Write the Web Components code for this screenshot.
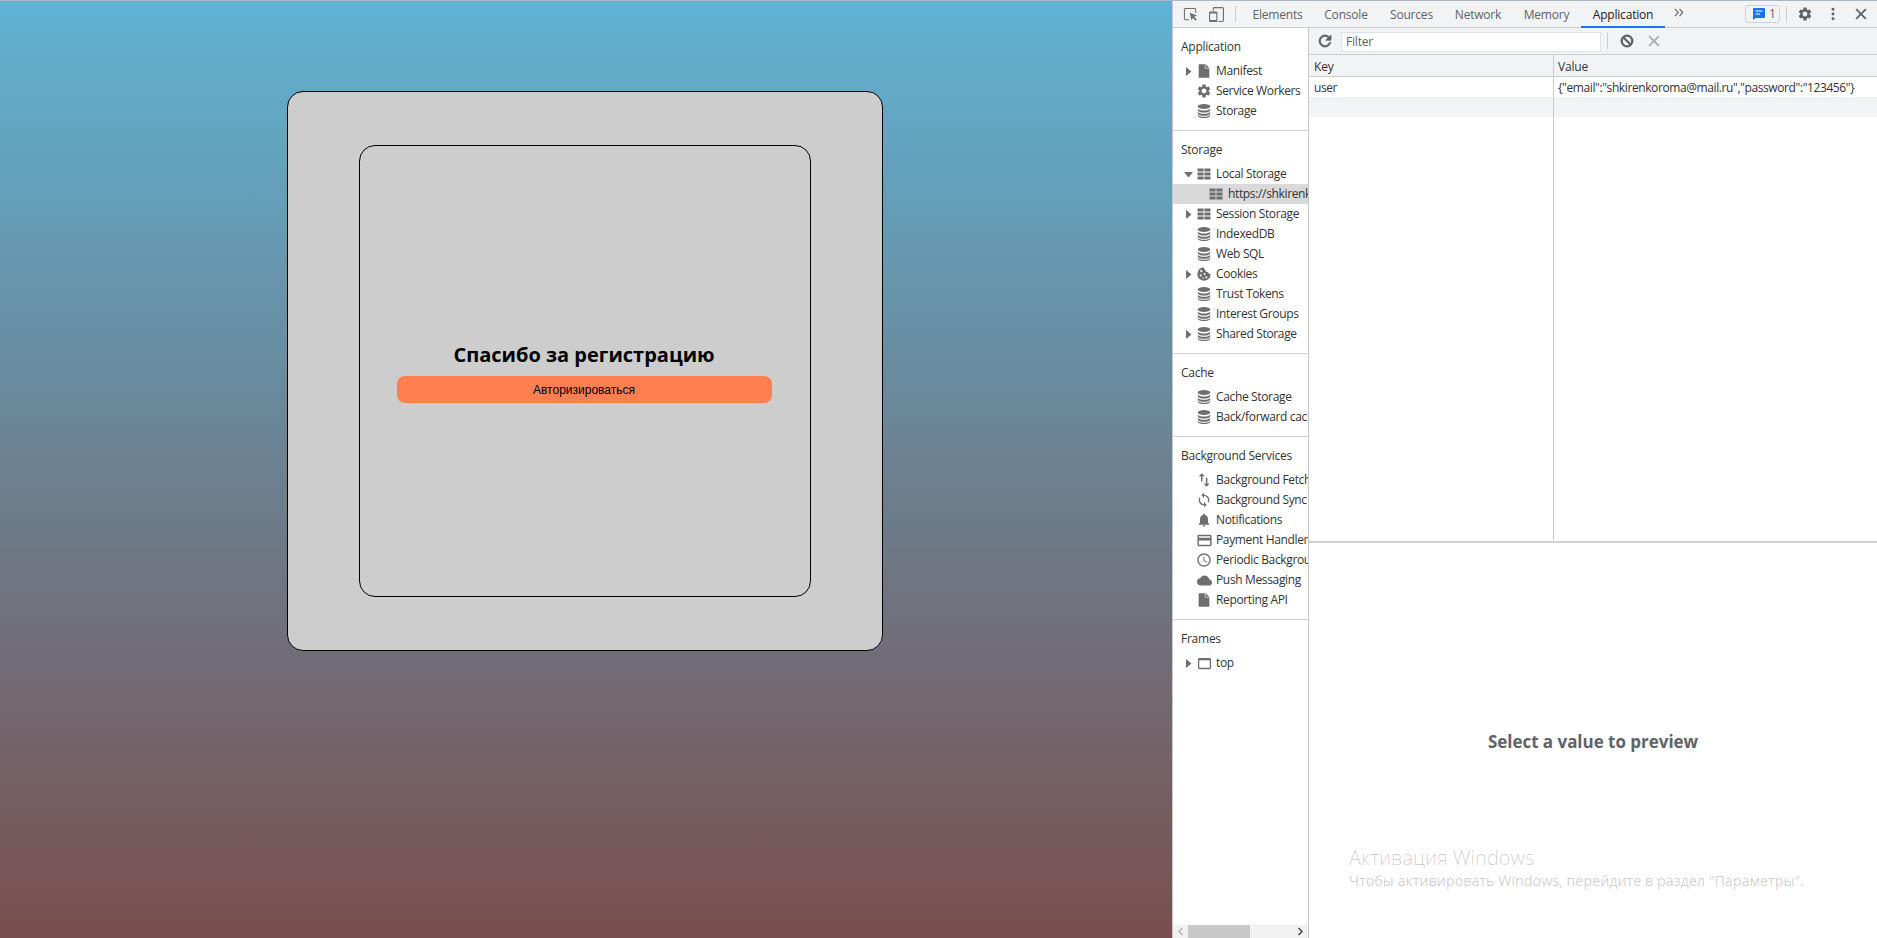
<!DOCTYPE html>
<html lang="ru">
<head>
<meta charset="utf-8">
<title>Спасибо за регистрацию</title>
<style>
html,body{margin:0;padding:0;height:100%;overflow:hidden;background:#fff}
</style>
</head>
<body>
<app-root>
  <reg-page slot="page">
    <reg-card>
      <reg-inner>
        <h1-title>Спасибо за регистрацию</h1-title>
        <reg-button>Авторизироваться</reg-button>
      </reg-inner>
    </reg-card>
  </reg-page>
  <dt-panel slot="tools">
    <dt-tabs></dt-tabs>
    <dt-body>
      <dt-sidebar>
        <dt-section label="Application">
          <dt-item icon="file" arrow="right">Manifest</dt-item>
          <dt-item icon="gear">Service Workers</dt-item>
          <dt-item icon="db">Storage</dt-item>
        </dt-section>
        <dt-section label="Storage">
          <dt-item icon="grid" arrow="down">Local Storage</dt-item>
          <dt-item icon="grid" depth="1" selected>https://shkirenkoroma.github.io</dt-item>
          <dt-item icon="grid" arrow="right">Session Storage</dt-item>
          <dt-item icon="db">IndexedDB</dt-item>
          <dt-item icon="db">Web SQL</dt-item>
          <dt-item icon="cookie" arrow="right">Cookies</dt-item>
          <dt-item icon="db">Trust Tokens</dt-item>
          <dt-item icon="db">Interest Groups</dt-item>
          <dt-item icon="db" arrow="right">Shared Storage</dt-item>
        </dt-section>
        <dt-section label="Cache">
          <dt-item icon="db">Cache Storage</dt-item>
          <dt-item icon="db">Back/forward cache</dt-item>
        </dt-section>
        <dt-section label="Background Services">
          <dt-item icon="swap">Background Fetch</dt-item>
          <dt-item icon="sync">Background Sync</dt-item>
          <dt-item icon="bell">Notifications</dt-item>
          <dt-item icon="card">Payment Handler</dt-item>
          <dt-item icon="clock">Periodic Background Sync</dt-item>
          <dt-item icon="cloud">Push Messaging</dt-item>
          <dt-item icon="file">Reporting API</dt-item>
        </dt-section>
        <dt-section label="Frames" last>
          <dt-item icon="frame" arrow="right">top</dt-item>
        </dt-section>
      </dt-sidebar>
      <dt-main>
        <dt-filterbar></dt-filterbar>
        <dt-table></dt-table>
        <dt-preview>Select a value to preview</dt-preview>
      </dt-main>
    </dt-body>
  </dt-panel>
  <win-mark slot="mark"></win-mark>
</app-root>

<script>
const UI_FONT = '"Open Sans","Noto Sans",sans-serif';
const ICONS = {
  file:['24','<path d="M6 2h8.500L20 7.500V22H4V2z"/><path d="M14 2v6h6" fill="none" stroke="#fff" stroke-width=".9"/>'],
  gear:['24','<path d="M19.14 12.94c.04-.3.06-.61.06-.94 0-.32-.02-.64-.07-.94l2.03-1.58a.49.49 0 0 0 .12-.61l-1.92-3.32a.488.488 0 0 0-.59-.22l-2.39.96c-.5-.38-1.03-.7-1.62-.94l-.36-2.54a.484.484 0 0 0-.48-.41h-3.84c-.24 0-.43.17-.47.41l-.36 2.54c-.59.24-1.13.57-1.62.94l-2.39-.96c-.22-.08-.47 0-.59.22L2.74 8.87c-.12.21-.08.47.12.61l2.03 1.58c-.05.3-.09.63-.09.94s.02.64.07.94l-2.03 1.58a.49.49 0 0 0-.12.61l1.92 3.32c.12.22.37.29.59.22l2.39-.96c.5.38 1.03.7 1.62.94l.36 2.54c.05.24.24.41.48.41h3.84c.24 0 .44-.17.47-.41l.36-2.54c.59-.24 1.13-.56 1.62-.94l2.39.96c.22.08.47 0 .59-.22l1.92-3.32c.12-.22.07-.47-.12-.61l-2.01-1.58zM12 15.6c-1.98 0-3.6-1.62-3.6-3.6s1.62-3.6 3.6-3.6 3.6 1.62 3.6 3.6-1.62 3.6-3.6 3.6z"/>'],
  db:['16','<ellipse cx="8" cy="3.600" rx="6.200" ry="2.500"/><path d="M1.800 5.300c.4 1.400 3 2.300 6.200 2.300s5.800-.9 6.200-2.300v2c-.4 1.400-3 2.300-6.200 2.300s-5.800-.9-6.200-2.300z"/><path d="M1.800 8.400c.4 1.400 3 2.300 6.200 2.300s5.800-.9 6.200-2.300v2c-.4 1.400-3 2.300-6.200 2.300s-5.800-.9-6.200-2.300z"/><path d="M1.800 11.400c.4 1.400 3 2.300 6.200 2.300s5.800-.9 6.200-2.300v1.300c-.4 1.400-3 2.300-6.200 2.300s-5.800-.9-6.200-2.300z"/>'],
  grid:['16','<path d="M1.500 2.500h6.100v3H1.500zM8.400 2.500h6.100v3H8.400zM1.500 6.500h6.100v3H1.500zM8.400 6.500h6.100v3H8.400zM1.500 10.500h6.100v3H1.500zM8.400 10.500h6.100v3H8.400z"/>'],
  cookie:['16','<path d="M8 1.300a6.700 6.700 0 1 0 6.700 6.700c-1.400.2-2.500-.7-2.700-2-1.400.2-2.700-.9-2.700-2.300C8.200 3.400 7.700 2.400 8 1.300z"/><g fill="#fff"><circle cx="5.300" cy="5.200" r="1.100"/><circle cx="4.700" cy="9.600" r="1"/><circle cx="8.500" cy="8" r=".9"/><circle cx="10.300" cy="11.200" r="1"/><circle cx="7" cy="12" r=".7"/></g>'],
  swap:['24','<path d="M16.500 17.010V9h-2v8.010h-3l4 3.990 4-3.990h-3zM9 3L5 6.990h3V14h2V6.990h3L9 3z"/>'],
  sync:['24','<path d="M12 4V1L8 5l4 4V6c3.310 0 6 2.690 6 6 0 1.010-.25 1.970-.7 2.800l1.460 1.460C19.540 15.030 20 13.570 20 12c0-4.420-3.580-8-8-8zm0 14c-3.310 0-6-2.690-6-6 0-1.010.25-1.970.7-2.800L5.240 7.740C4.460 8.970 4 10.430 4 12c0 4.420 3.580 8 8 8v3l4-4-4-4v3z"/>'],
  bell:['24','<path d="M12 22c1.100 0 2-.9 2-2h-4c0 1.100.89 2 2 2zm6-6v-5c0-3.070-1.640-5.640-4.500-6.320V4c0-.83-.67-1.500-1.500-1.500s-1.500.67-1.500 1.500v.68C7.630 5.360 6 7.920 6 11v5l-2 2v1h16v-1l-2-2z"/>'],
  card:['24','<path d="M20 4H4c-1.110 0-1.990.89-1.990 2L2 18c0 1.110.89 2 2 2h16c1.110 0 2-.89 2-2V6c0-1.110-.89-2-2-2zm0 14H4v-6h16v6zm0-10H4V6h16v2z"/>'],
  clock:['24','<path d="M11.990 2C6.470 2 2 6.480 2 12s4.470 10 9.990 10C17.520 22 22 17.520 22 12S17.520 2 11.990 2zM12 20c-4.420 0-8-3.580-8-8s3.580-8 8-8 8 3.580 8 8-3.580 8-8 8zm.5-13H11v6l5.250 3.150.75-1.230-4.500-2.670z"/>'],
  cloud:['24','<path d="M19.350 10.040C18.670 6.590 15.640 4 12 4 9.110 4 6.600 5.640 5.350 8.040 2.340 8.360 0 10.910 0 14c0 3.310 2.690 6 6 6h13c2.760 0 5-2.240 5-5 0-2.640-2.050-4.780-4.650-4.960z"/>'],
  frame:['16','<path fill-rule="evenodd" d="M2.500 2h11A1.500 1.500 0 0 1 15 3.500v9a1.500 1.500 0 0 1-1.500 1.500h-11A1.500 1.500 0 0 1 1 12.500v-9A1.500 1.500 0 0 1 2.500 2zM2.400 4.500v8.100h11.200V4.500z"/>'],
  refresh:['24','<path stroke="currentColor" stroke-width="1" d="M17.650 6.350C16.200 4.900 14.210 4 12 4c-4.420 0-7.990 3.580-7.990 8s3.570 8 7.990 8c3.730 0 6.840-2.550 7.730-6h-2.080c-.82 2.330-3.040 4-5.650 4-3.310 0-6-2.690-6-6s2.690-6 6-6c1.660 0 3.140.69 4.220 1.780L13 11h7V4l-2.350 2.350z"/>'],
  block:['24','<circle cx="12" cy="12" r="8" fill="none" stroke="currentColor" stroke-width="3.400"/><path d="M6.300 6.300l11.400 11.400" stroke="currentColor" stroke-width="3.400"/>'],
  close:['24','<path stroke="currentColor" stroke-width=".6" d="M19 6.410L17.590 5 12 10.590 6.410 5 5 6.410 10.590 12 5 17.590 6.410 19 12 13.410 17.590 19 19 17.590 13.410 12z"/>'],
  dots:['24','<circle cx="12" cy="5" r="2.200"/><circle cx="12" cy="12" r="2.200"/><circle cx="12" cy="19" r="2.200"/>'],
  inspect:['16','<path d="M6.500 13.500H2.700a1.200 1.200 0 0 1-1.200-1.200V2.700a1.200 1.200 0 0 1 1.200-1.200h9.600a1.200 1.200 0 0 1 1.200 1.200V6" fill="none" stroke="currentColor" stroke-width="1.100"/><path d="M7 6l8 3-3.200 1.300 2.900 3-1.300 1.300-2.900-3L9.200 14.500z"/>'],
  device:['16','<path fill-rule="evenodd" d="M5.500 0h8.700A1.800 1.800 0 0 1 16 1.800v12.400a1.800 1.800 0 0 1-1.800 1.800H10v-1.200h4.300a.5.500 0 0 0 .5-.5V1.700a.5.500 0 0 0-.5-.5H5.700a.5.500 0 0 0-.5.500V4H4V1.500A1.500 1.500 0 0 1 5.500 0z"/><path fill-rule="evenodd" d="M1.300 4.800h6.400A1.300 1.300 0 0 1 9 6.100v8.600A1.300 1.300 0 0 1 7.700 16H1.300A1.300 1.300 0 0 1 0 14.700V6.100a1.300 1.300 0 0 1 1.300-1.300zM1.200 7v6.800h6.600V7z"/>'],
  more:['12','<path d="M1.500 2.200L2.500 1.400 6 5.500 2.500 9.600 1.500 8.800 4.300 5.500zM6 2.200L7 1.400 10.500 5.500 7 9.600 6 8.800 8.800 5.500z"/>']
};
const ITEM_SIZE = {swap:18, card:17, cloud:15, frame:15};

function def(name, css, html){
  class C extends HTMLElement{
    constructor(){ super(); this.attachShadow({mode:'open'}); }
    connectedCallback(){
      if(this.shadowRoot.firstChild) return;
      this.shadowRoot.innerHTML='<style>'+css+'</style>'+(typeof html==='function'?html(this):html);
    }
  }
  customElements.define(name,C);
}

class DtIcon extends HTMLElement{
  constructor(){ super(); this.attachShadow({mode:'open'}); }
  connectedCallback(){
    const n=this.getAttribute('name'), s=this.getAttribute('size')||16, ic=ICONS[n];
    this.shadowRoot.innerHTML='<style>:host{display:inline-flex;align-items:center;justify-content:center;flex:none;width:'+s+'px;height:'+s+'px;color:var(--ic,#6e6e6e)}svg{display:block;fill:currentColor;overflow:visible}</style><svg width="'+s+'" height="'+s+'" viewBox="0 0 '+ic[0]+' '+ic[0]+'">'+ic[1]+'</svg>';
  }
}
customElements.define('dt-icon',DtIcon);

def('app-root',`
  :host{display:flex;flex-direction:column;width:1877px;height:938px;position:relative;overflow:hidden}
  .line{height:1px;background:#a9b6c4;flex:none}
  .row{flex:1;display:flex;min-height:0}
  ::slotted(reg-page){flex:none}
  ::slotted(dt-panel){flex:1}
`,`<div class="line"></div><div class="row"><slot name="page"></slot><slot name="tools"></slot></div><slot name="mark"></slot>`);

def('reg-page',`
  :host{display:flex;justify-content:center;align-items:flex-start;box-sizing:border-box;width:1172px;padding-top:90px;
    background:linear-gradient(180deg,#5fb3d4 0%,#794f4e 100%)}
`,`<slot></slot>`);

def('reg-card',`
  :host{display:flex;align-items:center;justify-content:center;box-sizing:border-box;width:596px;height:560px;margin-left:-2px;
    background:#cdcdcd;border:1px solid #000;border-radius:16px}
`,`<slot></slot>`);

def('reg-inner',`
  :host{display:flex;flex-direction:column;align-items:center;justify-content:center;box-sizing:border-box;width:452px;height:452px;padding-right:2px;
    border:1px solid #000;border-radius:16px}
`,`<slot></slot>`);

def('h1-title',`
  :host{display:block;font:700 20px/31px "Open Sans","Noto Sans",sans-serif;color:#000;margin-bottom:6px;white-space:nowrap}
`,`<slot></slot>`);

def('reg-button',`
  :host{display:flex;align-items:center;justify-content:center;width:375px;height:27px;border-radius:8px;background:#ff7f50;color:#000;
    font:12px "Liberation Sans",Arial,sans-serif}
`,`<slot></slot>`);

def('dt-panel',`
  :host{display:flex;flex-direction:column;min-width:0;border-left:1px solid #c4c7cb;background:#fff;
    font:12px/20px ${UI_FONT};color:#333}
`,`<slot></slot>`);

def('dt-tabs',`
  :host{display:flex;align-items:stretch;height:26px;box-sizing:content-box;background:#f1f3f4;border-bottom:1px solid #cbcdd1;flex:none;letter-spacing:-.2px}
  .ib{display:flex;align-items:center;gap:10px;padding:0 0 0 10px;--ic:#6e6e6e}
  .sep{width:1px;height:16px;background:#cbcdd1;align-self:center;flex:none}
  .tab{display:flex;align-items:center;justify-content:center;color:#5f6368;box-sizing:border-box;white-space:nowrap;padding-top:1px}
  .tab.on{color:#202124;border-bottom:2px solid #1a73e8;padding-top:3px;margin-bottom:-1px}
  .more{--ic:#6e6e6e;display:flex;align-items:center;margin-left:8px;margin-top:-2px}
  .right{margin-left:auto;display:flex;align-items:center;--ic:#5f6368;padding-right:7px}
  .badge{display:flex;align-items:center;gap:3px;box-sizing:border-box;width:35px;height:18px;border:1px solid #d0d3d7;border-radius:3px;padding-left:6px;color:#5f6368;--ic:#1a73e8;margin-right:6px}
  .badge span{font-size:12px}
`,`<div class="ib"><dt-icon name="inspect" size="15"></dt-icon><dt-icon name="device" size="15" style="margin-left:1px"></dt-icon></div>
  <div class="sep" style="margin:0 6px 0 11px"></div>
  <div class="tab" style="width:71px">Elements</div>
  <div class="tab" style="width:66px">Console</div>
  <div class="tab" style="width:65px">Sources</div>
  <div class="tab" style="width:68px">Network</div>
  <div class="tab" style="width:69px">Memory</div>
  <div class="tab on" style="width:84px">Application</div>
  <div class="more"><dt-icon name="more" size="12"></dt-icon></div>
  <div class="right">
    <div class="badge"><svg width="14" height="14" viewBox="0 0 14 14"><path d="M2 1h10a1 1 0 0 1 1 1v8a1 1 0 0 1-1 1H3.500L1 13V2a1 1 0 0 1 1-1z" fill="#1a73e8"/><path d="M3.500 4h7M3.500 7h4.500" stroke="#fff" stroke-width="1.200"/></svg><span>1</span></div>
    <div class="sep"></div>
    <dt-icon name="gear" size="16" style="margin-left:10px"></dt-icon>
    <dt-icon name="dots" size="16" style="margin-left:12px"></dt-icon>
    <dt-icon name="close" size="18" style="margin-left:11px"></dt-icon>
  </div>`);

def('dt-body',`
  :host{flex:1;display:flex;min-height:0}
`,`<slot></slot>`);

def('dt-sidebar',`
  :host{position:relative;display:flex;flex-direction:column;flex:none;width:135px;box-sizing:content-box;border-right:1px solid #c4c7cb;overflow:hidden;background:#fff}
  .list{flex:1;min-height:0;overflow:hidden}
  .bar{flex:none;height:13px;display:flex;align-items:center;background:#f1f1f1;position:relative}
  .btn{width:15px;height:13px;display:flex;align-items:center;justify-content:center;flex:none}
  .thumb{width:62px;height:13px;background:#c8c8c8;flex:none}
  .fill{flex:1}
`,`<div class="list"><slot></slot></div>
  <div class="bar"><div class="btn"><svg width="7" height="9" viewBox="0 0 7 9"><path d="M5.500 1L2 4.500 5.500 8" fill="none" stroke="#b4b4b4" stroke-width="1.500"/></svg></div><div class="thumb"></div><div class="fill"></div><div class="btn"><svg width="7" height="9" viewBox="0 0 7 9"><path d="M1.500 1L5 4.500 1.500 8" fill="none" stroke="#505050" stroke-width="1.600"/></svg></div></div>`);

def('dt-section',`
  :host{display:block;box-sizing:content-box;padding-bottom:9px;border-bottom:1px solid #d0d3d7}
  :host([last]){border-bottom:0}
  .h{height:24px;padding:9px 0 0 8px;line-height:20px;white-space:nowrap;color:#333;letter-spacing:-.25px}
`,el=>`<div class="h">${el.getAttribute('label')}</div><slot></slot>`);

def('dt-item',`
  :host{display:flex;align-items:center;height:20px;white-space:nowrap;padding-left:8px;box-sizing:border-box;overflow:hidden;width:135px;--ic:#6e6e6e}
  :host([depth="1"]){padding-left:20px}
  :host([selected]){background:#d9d9d9}
  .a{width:15px;flex:none;display:flex;align-items:center;justify-content:center;box-sizing:border-box}
  .i{width:16px;flex:none;display:flex;align-items:center;justify-content:center}
  .i dt-icon{margin:0 -2px}
  .t{margin-left:4px;color:#333;letter-spacing:-.35px}
`,el=>{
  const a=el.getAttribute('arrow'), ic=el.getAttribute('icon');
  const tri=a==='right'?'<svg width="7" height="9" viewBox="0 0 7 9"><path d="M1 0l5.500 4.500L1 9z" fill="#6e6e6e"/></svg>':a==='down'?'<svg width="9" height="7" viewBox="0 0 9 7"><path d="M0 1h9L4.500 6.500z" fill="#6e6e6e"/></svg>':'';
  return `<div class="a">${tri}</div><div class="i"><dt-icon name="${ic}" size="${ITEM_SIZE[ic]||16}"></dt-icon></div><span class="t"><slot></slot></span>`;
});

def('dt-main',`
  :host{flex:1;display:flex;flex-direction:column;min-width:0}
`,`<slot></slot>`);

def('dt-filterbar',`
  :host{flex:none;display:flex;align-items:center;height:26px;background:#f1f3f4;border-bottom:1px solid #cbcdd1;--ic:#5f6368;letter-spacing:-.2px}
  .input{box-sizing:border-box;width:260px;height:20px;background:#fff;border:1px solid #dfe1e5;padding-left:4px;line-height:18px;color:#5f6368;margin:2px 0 0 7px}
  .sep{width:1px;height:16px;background:#cbcdd1;margin:0 11px 0 6px}
`,`<dt-icon name="refresh" size="18" style="margin-left:7px"></dt-icon>
  <div class="input">Filter</div><div class="sep"></div>
  <dt-icon name="block" size="16"></dt-icon>
  <dt-icon name="close" size="18" style="margin-left:10px;--ic:#a9acb0"></dt-icon>`);

def('dt-table',`
  :host{flex:none;display:flex;height:486px;letter-spacing:-.4px}
  .col{display:flex;flex-direction:column}
  .c1{width:244px;border-right:1px solid #cbcdd1;box-sizing:content-box}
  .c2{flex:1}
  .hd{height:21px;line-height:23px;background:#f1f3f4;border-bottom:1px solid #cbcdd1;padding-left:5px;flex:none;letter-spacing:-.2px;overflow:hidden}
  .r{height:20px;padding-left:5px;flex:none;white-space:nowrap;line-height:22px;overflow:hidden}
  .c2 .hd,.c2 .r{padding-left:4px}
  .alt{background:#f1f3f4}
`,`<div class="col c1"><div class="hd">Key</div><div class="r">user</div><div class="r alt"></div></div>
  <div class="col c2"><div class="hd">Value</div><div class="r">{"email":"shkirenkoroma@mail.ru","password":"123456"}</div><div class="r alt"></div></div>`);

def('dt-preview',`
  :host{flex:1;display:flex;align-items:center;justify-content:center;border-top:2px solid #cfd1d4;padding-top:3px;box-sizing:border-box;
    font-weight:700;font-size:17px;letter-spacing:-.03px;color:#5f6368}
`,`<slot></slot>`);

def('win-mark',`
  :host{position:absolute;left:1349px;top:846px;display:block;font-family:"Open Sans","Noto Sans",sans-serif;color:rgba(0,0,0,.2);white-space:nowrap;pointer-events:none}
  .a{font-weight:300;font-size:20px;line-height:24px}
  .b{font-size:14.3px;line-height:20px;font-weight:400;margin-top:1px}
`,`<div class="a">Активация Windows</div><div class="b">Чтобы активировать Windows, перейдите в раздел "Параметры".</div>`);
</script>
</body>
</html>
